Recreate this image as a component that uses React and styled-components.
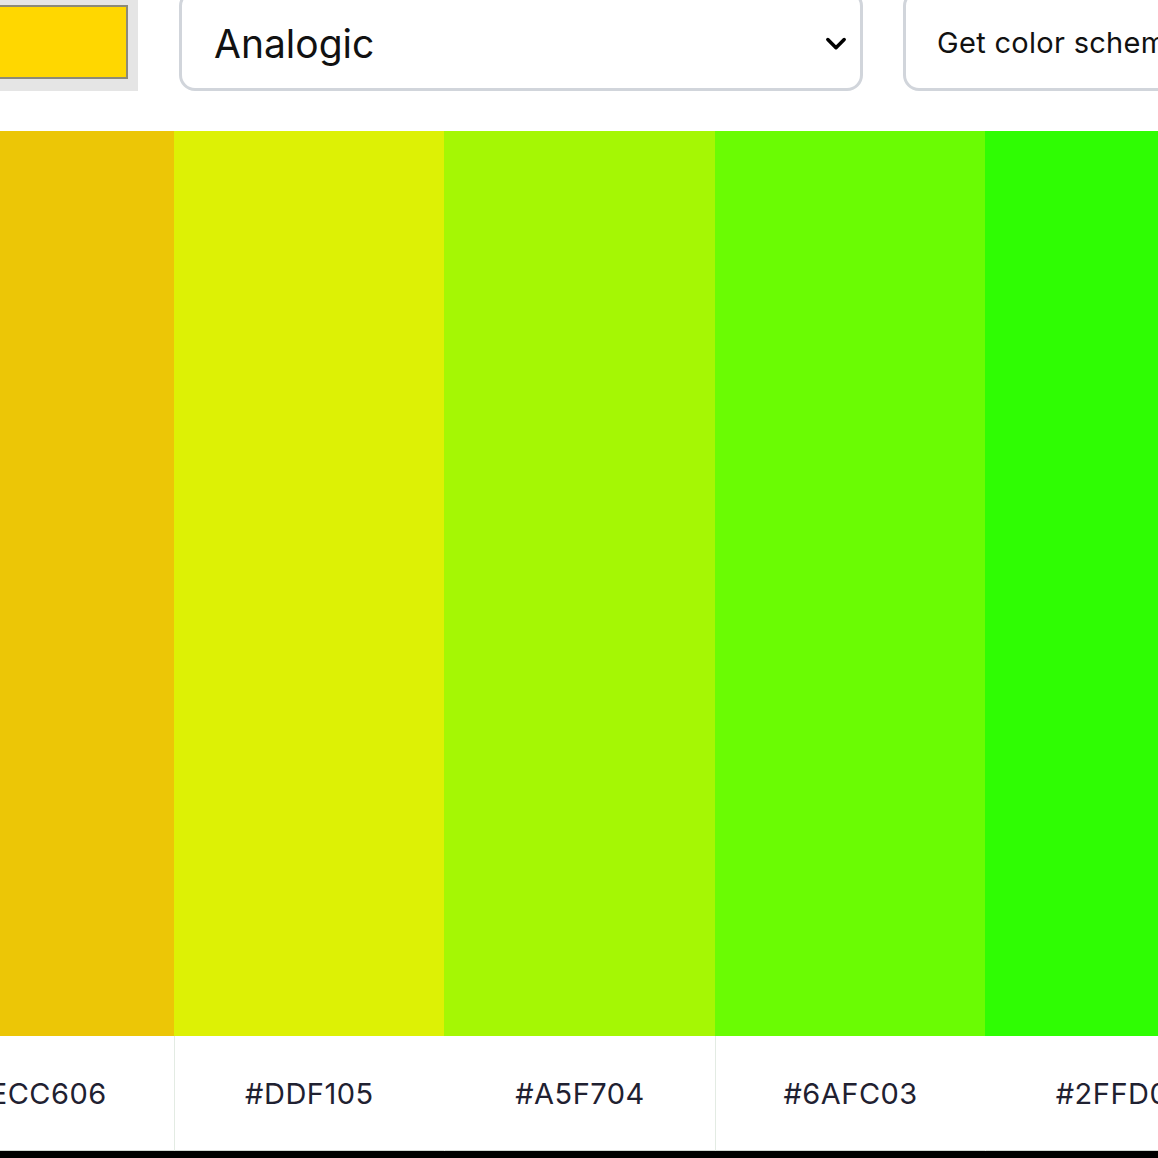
import React from "react";
import styled, { createGlobalStyle } from "styled-components";

const GlobalStyle = createGlobalStyle`
    html, body {
        margin: 0;
        padding: 0;
        background: #000;
    }
    body {
        font-family: Inter, "Noto Sans", sans-serif;
    }
`;

const Viewport = styled.div`
    width: 1158px;
    height: 1158px;
    overflow: hidden;
    background: #000;
`;

const Page = styled.div`
    width: 1353px;
    margin-left: -97px;
    margin-top: -10px;
    background: #fff;
`;

const Header = styled.div`
    display: flex;
    align-items: stretch;
    height: 101px;
`;

const SwatchBox = styled.div`
    width: 235px;
    background: #e5e5e5;
    padding: 15px 10px 12px 0;
    box-sizing: border-box;
    flex-shrink: 0;
`;

const Swatch = styled.div`
    height: 100%;
    background: ${(p) => p.color};
    border: 2px solid #8c8a78;
    box-sizing: border-box;
`;

const Select = styled.div`
    margin-left: 41px;
    width: 684px;
    flex-shrink: 0;
    border: 3px solid #d1d5db;
    border-radius: 16px;
    box-sizing: border-box;
    display: flex;
    align-items: center;
    justify-content: space-between;
    padding: 5px 10px 0 32px;
    font-size: 39px;
    color: #111;
    background: #fff;
`;

const Button = styled.button`
    margin-left: 40px;
    width: 420px;
    flex-shrink: 0;
    border: 3px solid #d1d5db;
    border-radius: 16px;
    background: #fff;
    box-sizing: border-box;
    font-family: Inter, "Noto Sans", sans-serif;
    font-size: 29px;
    color: #111;
    text-align: left;
    padding: 4px 0 0 31px;
    letter-spacing: 0.3px;
`;

const Scheme = styled.div`
    margin-top: 40px;
    display: grid;
    grid-template-columns: repeat(5, 1fr);
`;

const Column = styled.div`
    display: flex;
    flex-direction: column;
`;

const Color = styled.div`
    height: 905px;
    background: ${(p) => p.color};
`;

const Label = styled.div`
    height: 114px;
    display: flex;
    align-items: center;
    justify-content: center;
    font-size: 29px;
    font-weight: 400;
    color: #1f2131;
    letter-spacing: 0.5px;
    border-left: 1px solid ${(p) => (p.divider ? "#e3ebe3" : "transparent")};
    border-bottom: 1px solid #d4d9d4;
    background: #fff;
`;

const scheme = ["#ECC606", "#DDF105", "#A5F704", "#6AFC03", "#2FFD03"];

const ChevronDown = () => (
    <svg width="28" height="28" viewBox="0 0 24 24" fill="none" stroke="#000" strokeWidth="3" strokeLinecap="round" strokeLinejoin="round">
        <path d="M5 9l7 7 7-7" />
    </svg>
);

const App = () => (
    <Viewport>
        <GlobalStyle />
        <Page>
            <Header>
                <SwatchBox>
                    <Swatch color="#FFD700" />
                </SwatchBox>
                <Select>
                    <span>Analogic</span>
                    <ChevronDown />
                </Select>
                <Button>Get color scheme</Button>
            </Header>
            <Scheme>
                {scheme.map((c, i) => (
                    <Column key={c}>
                        <Color color={c} />
                        <Label divider={i === 1 || i === 3}>{c}</Label>
                    </Column>
                ))}
            </Scheme>
        </Page>
    </Viewport>
);

export default App;
